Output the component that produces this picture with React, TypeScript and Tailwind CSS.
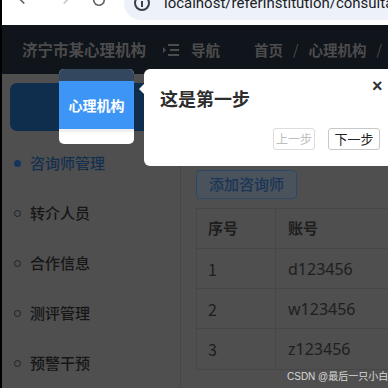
import React from "react";

const font = { fontFamily: '"Noto Sans CJK SC", "Noto Sans", sans-serif' };

function MenuItem({ label, active }: { label: string; active?: boolean }) {
  return (
    <div className="flex items-center h-[50px] pl-[12px]">
      {active ? (
        <span className="w-[7px] h-[7px] rounded-full bg-[#15355f]" />
      ) : (
        <span className="w-[7px] h-[7px] rounded-full border-[1.5px] border-[#222]" />
      )}
      <span
        className={
          "ml-[9px] text-[15px] font-medium " +
          (active ? "text-[#15304f]" : "text-[#161616]")
        }
      >
        {label}
      </span>
    </div>
  );
}

export default function App() {
  const rows = [
    ["1", "d123456"],
    ["2", "w123456"],
    ["3", "z123456"],
  ];
  return (
    <div
      className="relative w-[388px] h-[388px] overflow-hidden bg-[#4f4f4f] border-l-2 border-black"
      style={font}
    >
      {/* Browser bar */}
      <div className="h-[25px] bg-white relative overflow-hidden">
        <div className="absolute left-[14px] -top-[10px] text-[#5f6368]">
          <svg width="18" height="18" viewBox="0 0 24 24" fill="none" stroke="currentColor" strokeWidth="2.2">
            <path d="M20 12H5M11 6l-6 6 6 6" />
          </svg>
        </div>
        <div className="absolute left-[52px] -top-[10px] text-[#c4c7ca]">
          <svg width="18" height="18" viewBox="0 0 24 24" fill="none" stroke="currentColor" strokeWidth="2.2">
            <path d="M4 12h15M13 6l6 6-6 6" />
          </svg>
        </div>
        <div className="absolute left-[88px] -top-[9px] text-[#5f6368]">
          <svg width="18" height="18" viewBox="0 0 24 24" fill="none" stroke="currentColor" strokeWidth="2.2">
            <path d="M19 12a7 7 0 1 1-2.05-4.95" />
          </svg>
        </div>
        <div className="absolute left-[122px] right-0 -top-[14px] h-[34px] rounded-l-full bg-[#edf2fa] flex items-center overflow-hidden">
          <div className="ml-[10px] shrink-0 w-[16px] h-[16px] rounded-full border-2 border-[#3c4043] flex items-end justify-center">
            <span className="w-[2px] h-[6px] bg-[#3c4043] mb-[2px]" />
          </div>
          <span
            className="ml-[14px] text-[15px] text-[#202124] whitespace-nowrap"
            style={{ fontFamily: '"Roboto", "Liberation Sans", sans-serif' }}
          >
            localhost/referInstitution/consulta
          </span>
        </div>
      </div>

      {/* App header */}
      <div className="h-[49px] bg-[#10141b] flex items-center text-[#4c4c4c] font-bold whitespace-nowrap">
        <span className="ml-[20px] text-[15.5px] shrink-0">济宁市某心理机构</span>
        <svg className="ml-[17px] shrink-0" width="16" height="14" viewBox="0 0 16 14" fill="#4c4c4c">
          <rect x="5" y="1" width="11" height="2" />
          <rect x="7" y="6" width="9" height="2" />
          <rect x="5" y="11" width="11" height="2" />
          <path d="M0 4l3 3-3 3z" />
        </svg>
        <span className="ml-[12px] text-[14.5px] shrink-0">导航</span>
        <span className="ml-[34px] text-[14.5px] shrink-0">首页</span>
        <span className="ml-[10px] text-[14px] font-normal shrink-0">/</span>
        <span className="ml-[10px] text-[14.5px] shrink-0">心理机构</span>
        <span className="ml-[10px] text-[14px] font-normal shrink-0">/</span>
      </div>

      {/* Body */}
      <div className="flex h-[314px]">
        <div className="w-[179px] shrink-0 border-r border-[#464646] pt-[9px]">
          <div className="ml-[8px] h-[48px] rounded-l-[7px] bg-[#0f2d4d]" />
          <div className="mt-[7px]">
            <MenuItem label="咨询师管理" active />
            <MenuItem label="转介人员" />
            <MenuItem label="合作信息" />
            <MenuItem label="测评管理" />
            <MenuItem label="预警干预" />
          </div>
        </div>
        <div className="flex-1 pl-[15px] pt-[96px]">
          <div className="w-[101px] h-[29px] rounded-[4px] border border-[#2c4866] bg-[#4a535c] flex items-center justify-center text-[15px] font-medium text-[#1a3556]">
            添加咨询师
          </div>
          <div className="mt-[9px] border border-[#474747] border-r-0">
            <div className="flex h-[40px] items-center text-[15px] font-bold text-[#1e1e1e] border-b border-[#474747]">
              <div className="w-[79px] h-full flex items-center pl-[11px] border-r border-[#474747]">序号</div>
              <div className="pl-[12px]">账号</div>
            </div>
            {rows.map(([n, a], i) => (
              <div
                key={n}
                className={
                  "flex h-[40px] items-center text-[16px] text-[#1e1e1e] " +
                  (i < 2 ? "border-b border-[#474747]" : "")
                }
              >
                <div className="w-[79px] h-full flex items-center pl-[11px] border-r border-[#474747]">{n}</div>
                <div className="pl-[12px]" style={{ fontFamily: '"Noto Sans", sans-serif' }}>{a}</div>
              </div>
            ))}
          </div>
        </div>
      </div>

      {/* Highlighted element */}
      <div className="absolute left-[57px] top-[69px] w-[75px] h-[75px] rounded-[5px] bg-white overflow-hidden flex flex-col">
        <div className="h-[12px] bg-[#33475f]" />
        <div className="h-[48px] bg-[#3d95f5] flex items-center justify-center text-white text-[14px] font-bold">
          心理机构
        </div>
        <div className="h-[3px] bg-[#f0f0f0]" />
      </div>

      {/* Popover */}
      <div className="absolute left-[142px] top-[69px] w-[260px] h-[97px] rounded-[6px] bg-white">
        <div className="absolute -left-[5px] top-[14px] w-0 h-0 border-y-[6px] border-y-transparent border-r-[6px] border-r-white" />
        <div className="absolute left-[16px] top-[16px] text-[18px] font-bold text-[#2d2d2d]">这是第一步</div>
        <div className="absolute left-[228px] top-[4px] text-[18px] font-bold text-[#333]" style={{ fontFamily: '"Liberation Sans", sans-serif' }}>×</div>
        <div className="absolute left-[129px] top-[59px] w-[42px] h-[22px] rounded-[3px] border border-[#dddddd] flex items-center justify-center text-[12px] text-[#bdbdbd]">
          上一步
        </div>
        <div className="absolute left-[184px] top-[59px] w-[52px] h-[22px] rounded-[3px] border border-[#c8c8c8] flex items-center justify-center text-[13px] text-[#222]">
          下一步
        </div>
      </div>

      {/* Watermark */}
      <div className="absolute left-[285px] top-[368px] text-[10px] text-[#d8d8d8] whitespace-nowrap">
        <span style={{ fontFamily: '"Liberation Sans", sans-serif' }}>CSDN @</span>最后一只小白
      </div>
    </div>
  );
}
